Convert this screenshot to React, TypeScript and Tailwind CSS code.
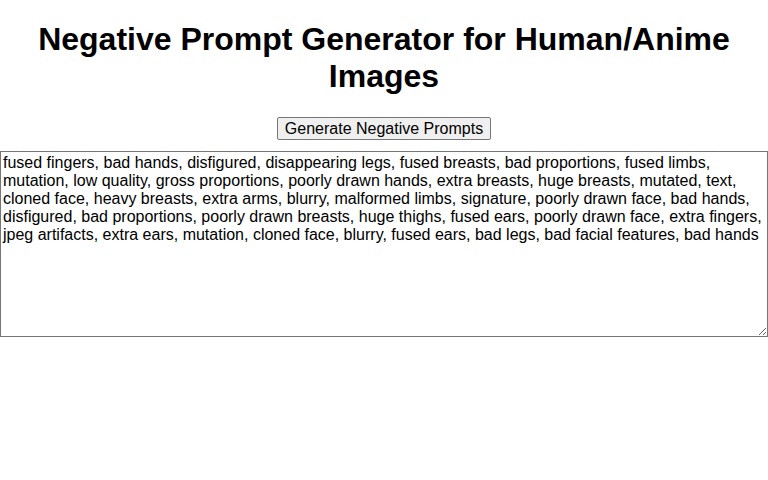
import React from "react";

const prompts =
  "fused fingers, bad hands, disfigured, disappearing legs, fused breasts, bad proportions, fused limbs, mutation, low quality, gross proportions, poorly drawn hands, extra breasts, huge breasts, mutated, text, cloned face, heavy breasts, extra arms, blurry, malformed limbs, signature, poorly drawn face, bad hands, disfigured, bad proportions, poorly drawn breasts, huge thighs, fused ears, poorly drawn face, extra fingers, jpeg artifacts, extra ears, mutation, cloned face, blurry, fused ears, bad legs, bad facial features, bad hands";

export default function App() {
  return (
    <div className="min-h-screen bg-white text-black font-['Liberation_Sans',Arial,sans-serif]">
      <h1 className="text-[32px] font-bold text-center leading-[37px] pt-[21px] mb-[22px]">
        Negative Prompt Generator for Human/Anime Images
      </h1>
      <div className="text-center">
        <button className="text-[16px] leading-[19px] px-[7px] py-[1px] border border-[#767676] rounded-[2px] bg-[#efefef] text-black">
          Generate Negative Prompts
        </button>
      </div>
      <textarea
        className="block mt-[10px] w-full h-[186px] border border-[#767676] p-[2px] text-[16px] leading-[18px] text-black font-['Liberation_Sans',Arial,sans-serif] outline-none"
        defaultValue={prompts}
        readOnly
      />
    </div>
  );
}
